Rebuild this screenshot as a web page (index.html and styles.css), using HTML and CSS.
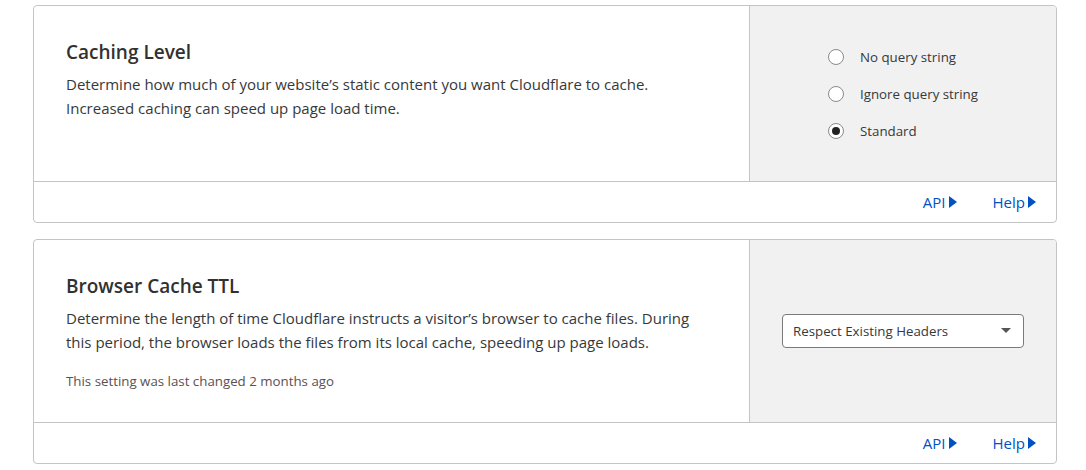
FILE: index.html
```html
<!DOCTYPE html>
<html>
<head>
<meta charset="utf-8">
<link rel="stylesheet" href="styles.css">
</head>
<body>
<div class="page">
  <section class="card">
    <div class="card-main">
      <div class="card-body">
        <h3 class="title">Caching Level</h3>
        <p class="desc">Determine how much of your website’s static content you want Cloudflare to cache. Increased caching can speed up page load time.</p>
      </div>
      <div class="card-control">
        <div class="radios">
          <label class="radio"><span class="dot"></span><span>No query string</span></label>
          <label class="radio"><span class="dot"></span><span>Ignore query string</span></label>
          <label class="radio"><span class="dot checked"></span><span>Standard</span></label>
        </div>
      </div>
    </div>
    <div class="card-footer">
      <a class="link">API<svg class="tri" viewBox="0 0 8 12"><path d="M0 0L8 6L0 12Z"/></svg></a>
      <a class="link">Help<svg class="tri" viewBox="0 0 8 12"><path d="M0 0L8 6L0 12Z"/></svg></a>
    </div>
  </section>

  <section class="card">
    <div class="card-main">
      <div class="card-body">
        <h3 class="title">Browser Cache TTL</h3>
        <p class="desc">Determine the length of time Cloudflare instructs a visitor’s browser to cache files. During this period, the browser loads the files from its local cache, speeding up page loads.</p>
        <p class="note">This setting was last changed 2 months ago</p>
      </div>
      <div class="card-control">
        <div class="select">
          <span>Respect Existing Headers</span>
          <svg class="caret" viewBox="0 0 10 5"><path d="M0 0H10L5 5Z"/></svg>
        </div>
      </div>
    </div>
    <div class="card-footer">
      <a class="link">API<svg class="tri" viewBox="0 0 8 12"><path d="M0 0L8 6L0 12Z"/></svg></a>
      <a class="link">Help<svg class="tri" viewBox="0 0 8 12"><path d="M0 0L8 6L0 12Z"/></svg></a>
    </div>
  </section>
</div>
</body>
</html>
```

FILE: styles.css
```css
* { box-sizing: border-box; }
html, body { margin: 0; padding: 0; background: #fff; }
body {
  font-family: "Open Sans", "Noto Sans", sans-serif;
  color: #36393a;
}
.page {
  padding: 5px 0 0 33px;
  width: 1057px;
  display: flex;
  flex-direction: column;
  gap: 16px;
}
.card {
  border: 1px solid #c4c4c4;
  border-radius: 4px;
  background: #fff;
  overflow: hidden;
}
.card-main {
  display: grid;
  grid-template-columns: 1fr 307px;
  border-bottom: 1px solid #c4c4c4;
}
.card-body {
  padding: 32px 32px 31px 32px;
}
.title {
  margin: 0;
  font-size: 19px;
  font-weight: 600;
  line-height: 28px;
  color: #313131;
}
.desc {
  margin: 6px 0 0;
  font-size: 15px;
  line-height: 24px;
  max-width: 640px;
}
.note {
  margin: 17px 0 0;
  font-size: 13.3px;
  line-height: 20px;
  color: #5b5153;
}
.card-control {
  background: #f1f1f1;
  border-left: 1px solid #c4c4c4;
  display: flex;
  align-items: center;
  justify-content: center;
  padding: 43px 0 42px;
}
.radios {
  display: flex;
  flex-direction: column;
  gap: 21px;
}
.radio {
  display: flex;
  align-items: center;
  gap: 16px;
  font-size: 13.3px;
  line-height: 16px;
  color: #36393a;
}
.dot {
  width: 16px;
  height: 16px;
  border-radius: 50%;
  border: 1px solid #8a8a8a;
  background: #fff;
  display: flex;
  align-items: center;
  justify-content: center;
  flex: none;
}
.dot.checked::after {
  content: "";
  width: 8px;
  height: 8px;
  border-radius: 50%;
  background: #222;
}
.select {
  width: 242px;
  height: 34px;
  border: 1px solid #7a7a7a;
  border-radius: 4px;
  background: #fff;
  display: flex;
  align-items: center;
  justify-content: space-between;
  padding: 0 12px 0 10px;
  font-size: 13.3px;
  color: #36393a;
  margin-top: -2px;
}
.caret { width: 10px; height: 5px; fill: #555; }
.card-footer {
  height: 40px;
  display: flex;
  justify-content: flex-end;
  align-items: center;
  gap: 36px;
  padding-right: 20px;
}
.link {
  display: flex;
  align-items: center;
  gap: 3px;
  font-size: 15px;
  color: #0051c3;
  cursor: pointer;
}
.tri { width: 8px; height: 12px; fill: #0051c3; }
```
